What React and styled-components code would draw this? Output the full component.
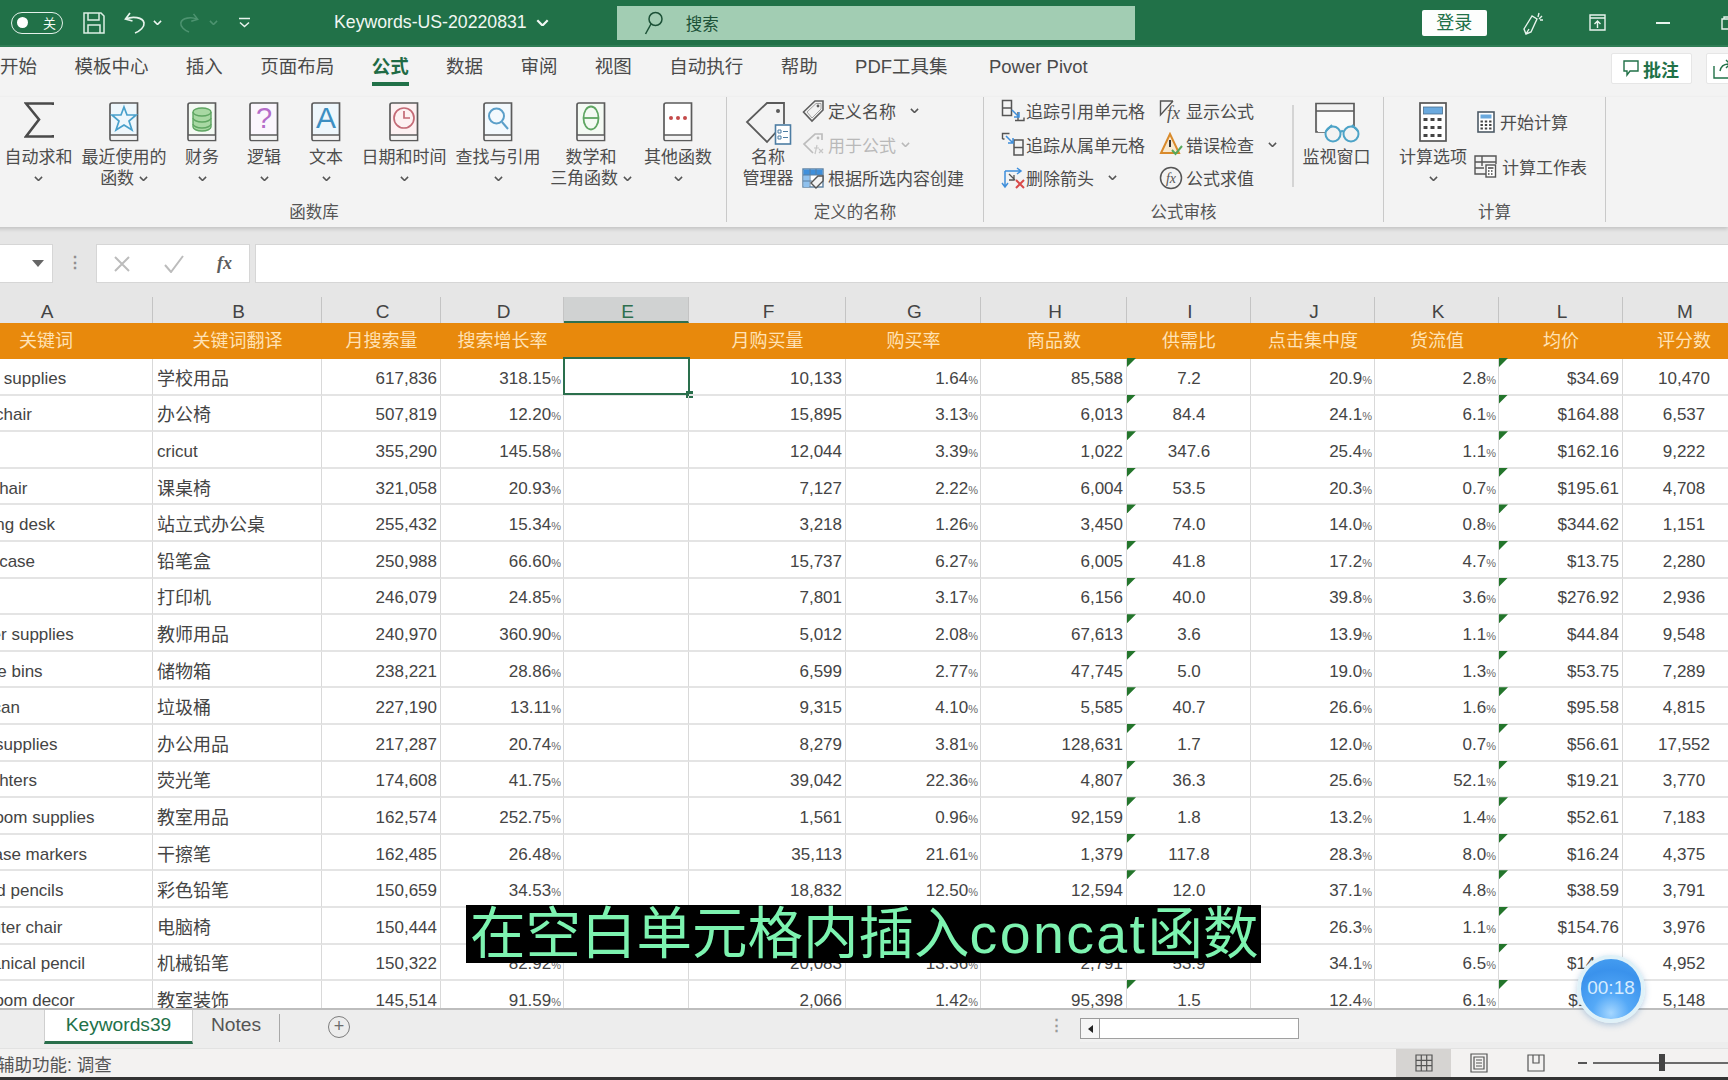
import styled, { createGlobalStyle } from "styled-components";

const GlobalStyle = createGlobalStyle`
  html, body {
    margin: 0;
    padding: 0;
    background: #f3f3f3;
  }
  body {
    font-family: "Liberation Sans", "Noto Sans CJK SC", sans-serif;
    color: #444;
  }
  * {
    box-sizing: border-box;
  }
`;

const Page = styled.div`
  position: relative;
  width: 1728px;
  height: 1080px;
  overflow: hidden;
  display: flex;
  flex-direction: column;
`;

/* title bar */
const TitleBar = styled.div`
  flex: none;
  height: 47px;
  background: #217148;
  border-bottom: 2px solid #2f7d55;
  display: flex;
  align-items: center;
  padding-left: 11px;
  color: #fff;
  white-space: nowrap;
`;

const Slot = styled.span`
  flex: none;
  display: inline-flex;
  align-items: center;
  margin-left: ${(p) => p.$gap || 0}px;
`;

const Toggle = styled.span`
  flex: none;
  width: 52px;
  height: 22px;
  border: 1.5px solid #e4f1ea;
  border-radius: 11px;
  display: flex;
  align-items: center;
  justify-content: space-between;
  padding: 0 6px 0 5px;
  font-size: 13px;
  color: #f2faf5;
  &::before {
    content: "";
    width: 11px;
    height: 11px;
    border-radius: 50%;
    background: #fff;
  }
`;

const DocName = styled.span`
  margin-left: ${(p) => p.$gap}px;
  font-size: 17.7px;
  color: #f1f7f3;
`;

const SearchBox = styled.div`
  flex: none;
  margin: 1px 0 0 68px;
  width: 518px;
  height: 34px;
  background: #a2cdb3;
  display: flex;
  align-items: center;
  padding-left: 27px;
  color: #1c5137;
  font-size: 16.5px;
  gap: 23px;
`;

const LoginBtn = styled.div`
  flex: none;
  margin-left: 287px;
  width: 65px;
  height: 26px;
  background: #fdfefd;
  border-radius: 2px;
  color: #217148;
  font-size: 18px;
  line-height: 26px;
  text-align: center;
`;

/* tabs */
const TabBar = styled.div`
  flex: none;
  height: 50px;
  background: #f3f3f3;
  display: flex;
  align-items: flex-start;
  gap: 37.4px;
  padding-top: 9px;
  white-space: nowrap;
`;

const Tab = styled.div`
  font-size: 18.5px;
  line-height: 22px;
  height: 30px;
  color: ${(p) => (p.$active ? "#1f6b45" : "#4a4a4a")};
  font-weight: ${(p) => (p.$active ? 700 : 400)};
  border-bottom: ${(p) => (p.$active ? "4px solid #217148" : "none")};
  margin-left: ${(p) => p.$gap || 0}px;
`;

const Comment = styled.div`
  flex: none;
  margin-left: auto;
  margin-top: -3px;
  width: 81px;
  height: 31px;
  background: #fff;
  border: 1px solid #e6e6e6;
  border-radius: 2px;
  display: flex;
  align-items: center;
  justify-content: center;
  gap: 4px;
  font-size: 18px;
  font-weight: 700;
  color: #217148;
`;

const ShareStub = styled(Comment)`
  margin-left: -23px;
  margin-right: -18px;
  width: 40px;
  justify-content: flex-start;
  padding-left: 6px;
`;

/* ribbon */
const Ribbon = styled.div`
  flex: none;
  height: 130px;
  background: #f3f3f3;
  display: flex;
  margin-left: -98px;
  width: 1826px;
  padding-bottom: 5px;
  box-shadow: 0 2px 4px rgba(0, 0, 0, 0.16);
  position: relative;
  font-size: 17px;
  color: #4d4d4d;
  white-space: nowrap;
`;

const Group = styled.div`
  flex: none;
  width: ${(p) => p.$w}px;
  border-right: 1.5px solid #c9c9c9;
  display: flex;
  flex-direction: column;
`;

const GroupBody = styled.div`
  flex: 1;
  display: flex;
  padding-left: ${(p) => p.$left || 0}px;
`;

const Caption = styled.div`
  flex: none;
  height: 25px;
  padding-top: 4px;
  line-height: 22px;
  text-align: center;
  font-size: 16.5px;
  color: #555;
`;

const BigBtn = styled.div`
  flex: none;
  width: ${(p) => p.$w}px;
  margin-left: ${(p) => p.$gap || 0}px;
  padding-top: 5px;
  display: flex;
  flex-direction: column;
  align-items: center;
  line-height: 21px;
  text-align: center;
`;

const BigIcon = styled.div`
  height: 40px;
  margin-bottom: 5px;
  display: flex;
  justify-content: center;
  align-items: flex-start;
`;

const ChevronLine = styled.div`
  height: 21px;
  display: flex;
  align-items: center;
  justify-content: center;
`;

const SmallCol = styled.div`
  flex: none;
  width: ${(p) => p.$w}px;
  margin-left: ${(p) => p.$gap || 0}px;
  margin-top: ${(p) => p.$top || 0}px;
`;

const SmallRow = styled.div`
  height: ${(p) => p.$h || 33.5}px;
  display: flex;
  align-items: center;
  color: ${(p) => (p.$off ? "#b9b9b9" : "inherit")};
`;

const SmallIcon = styled.span`
  flex: none;
  width: ${(p) => p.$w || 26}px;
  display: inline-flex;
  align-items: center;
`;

const MiniSep = styled.div`
  flex: none;
  width: 1.5px;
  height: 82px;
  margin-top: 8px;
  background: #d4d4d4;
`;

/* formula bar */
const FormulaBand = styled.div`
  flex: none;
  height: 70px;
  background: #e6e6e6;
  padding-top: 17px;
  display: flex;
  align-items: flex-start;
`;

const NameBox = styled.div`
  flex: none;
  width: 53px;
  height: 39px;
  background: #fff;
  border: 1px solid #d6d6d6;
  border-left: none;
  display: flex;
  align-items: center;
  justify-content: flex-end;
  padding-right: 8px;
`;

const Grip = styled.div`
  flex: none;
  width: 43px;
  height: 39px;
  color: #8f8f8f;
  font-size: 16px;
  line-height: 37px;
  text-align: center;
  font-weight: 700;
`;

const FxBox = styled.div`
  flex: none;
  width: 154px;
  height: 39px;
  background: #fff;
  border: 1px solid #d6d6d6;
  display: flex;
  align-items: center;
  padding-left: 16px;
  gap: 32px;
  color: #bcbcbc;
`;

const FxLabel = styled.span`
  font-family: "Liberation Serif", serif;
  font-style: italic;
  font-weight: 700;
  font-size: 18px;
  color: #5c5c5c;
`;

const FormulaInput = styled.div`
  flex: 1;
  margin-left: 5px;
  height: 39px;
  background: #fff;
  border: 1px solid #d6d6d6;
  border-right: none;
`;

/* sheet */
const COLS = "214px 169px 119px 123px 125px 157px 135px 146px 124px 124px 124px 124px 122px";

const Sheet = styled.div`
  flex: 1;
  min-height: 0;
  overflow: hidden;
  background: #fff;
`;

const SheetGrid = styled.div`
  margin-left: -61px;
  display: grid;
  grid-template-columns: ${COLS};
  grid-template-rows: 26px 36px;
  grid-auto-rows: 36.6px;
  width: 1786px;
`;

const ColHead = styled.div`
  background: ${(p) => (p.$on ? "#d0d2d2" : "#e6e6e6")};
  border-right: 1.5px solid #c4c4c4;
  border-bottom: ${(p) => (p.$on ? "2.5px solid #2e6f4e" : "none")};
  color: ${(p) => (p.$on ? "#2e6f4e" : "#444")};
  font-size: 19px;
  line-height: 29px;
  height: 26px;
  padding-left: 3px;
  overflow: hidden;
  text-align: center;
`;

const OrangeCell = styled.div`
  background: #e8890c;
  color: #ffe2b5;
  font-size: 18px;
  line-height: 36px;
  text-align: center;
  white-space: nowrap;
`;

const aligns = { l: "flex-start", r: "flex-end", c: "center" };

const Cell = styled.div`
  position: relative;
  display: flex;
  align-items: center;
  justify-content: ${(p) => aligns[p.$align]};
  padding: ${(p) => (p.$cjk ? 1 : 5)}px ${(p) => (p.$pct ? 2 : 3)}px 0 ${(p) => (p.$keyword ? 11 : 4)}px;
  border-right: 1px solid #d9d9d9;
  border-bottom: 2px solid #e4e4e4;
  font-size: ${(p) => (p.$cjk ? 18 : 17)}px;
  color: #444;
  white-space: nowrap;
  overflow: visible;
  &::before {
    content: "";
    display: ${(p) => (p.$flag ? "block" : "none")};
    position: absolute;
    left: 0;
    top: -1px;
    width: 9px;
    height: 9px;
    background: #23752b;
    clip-path: polygon(0 0, 100% 0, 0 100%);
  }
`;

const ClipText = styled.span`
  display: block;
`;

const Percent = styled.span`
  font-size: 11px;
  color: #6a6a6a;
`;

const Selection = styled.div`
  position: absolute;
  left: -1px;
  top: -2px;
  right: -2px;
  bottom: -1px;
  border: 2.5px solid #2a6f4c;
  &::after {
    content: "";
    position: absolute;
    right: -5px;
    bottom: -5px;
    width: 7px;
    height: 7px;
    background: #2a6f4c;
  }
`;

/* sheet tabs */
const SheetBar = styled.div`
  flex: none;
  height: 40px;
  background: #ededed;
  border-top: 2px solid #bdbdbd;
  display: flex;
  align-items: flex-start;
  position: relative;
`;

const SheetTab = styled.div`
  flex: none;
  margin-left: ${(p) => p.$gap || 0}px;
  width: ${(p) => p.$w}px;
  height: ${(p) => (p.$active ? 34 : 30)}px;
  text-align: center;
  background: ${(p) => (p.$active ? "#fff" : "transparent")};
  border-bottom: ${(p) => (p.$active ? "3px solid #2a6f4c" : "none")};
  color: ${(p) => (p.$active ? "#217148" : "#555")};
  font-size: 19.2px;
  line-height: 30px;
  border-left: ${(p) => (p.$active ? "1px solid #cfcfcf" : "none")};
  border-right: ${(p) => (p.$active ? "1px solid #cfcfcf" : "none")};
`;

const TabSep = styled.div`
  flex: none;
  width: 1px;
  height: 28px;
  margin: 4px 0 0 17px;
  background: #a8a8a8;
`;

const AddSheet = styled.div`
  flex: none;
  margin: 6px 0 0 48px;
  width: 22px;
  height: 22px;
  border: 1.5px solid #7d7d7d;
  border-radius: 50%;
  color: #6c6c6c;
  font-size: 18px;
  line-height: 18px;
  text-align: center;
`;

const GripV = styled.div`
  flex: none;
  margin: 0 0 0 699px;
  width: 4px;
  height: 30px;
  color: #9a9a9a;
  font-size: 15px;
  line-height: 30px;
  font-weight: 700;
`;

const ScrollArea = styled.div`
  flex: 1;
  margin-left: 27px;
  padding-top: 8px;
  height: 32px;
  background: #f1f1f1;
  display: flex;
`;

const ScrollBtn = styled.div`
  flex: none;
  width: 20px;
  height: 21px;
  background: #f6f6f6;
  border: 1px solid #9a9a9a;
  display: flex;
  align-items: center;
  justify-content: center;
  &::before {
    content: "";
    border-top: 4px solid transparent;
    border-bottom: 4px solid transparent;
    border-right: 5px solid #222;
  }
`;

const ScrollThumb = styled.div`
  flex: none;
  width: 199px;
  height: 21px;
  background: #fff;
  border: 1px solid #a0a0a0;
  border-left: none;
`;

/* status bar */
const StatusBar = styled.div`
  flex: none;
  height: 29px;
  background: #f3f2f1;
  border-top: 1px solid #e2e2e2;
  display: flex;
  align-items: center;
  font-size: 17.5px;
  color: #555;
  white-space: nowrap;
  overflow: hidden;
`;

const StatusText = styled.span`
  flex: none;
  margin-left: -3px;
  width: 1399px;
`;

const ViewBtn = styled.div`
  flex: none;
  width: ${(p) => p.$w}px;
  height: 28px;
  background: ${(p) => (p.$on ? "#d6d4d2" : "transparent")};
  display: flex;
  align-items: center;
  justify-content: center;
`;

const Zoomer = styled.div`
  flex: none;
  margin-left: 14px;
  display: flex;
  align-items: center;
  width: 160px;
`;

const ZoomMinus = styled.span`
  width: 9px;
  height: 1.5px;
  background: #555;
`;

const ZoomLine = styled.div`
  flex: 1;
  margin-left: 6px;
  height: 1.5px;
  background: #6a6a6a;
  position: relative;
  &::after {
    content: "";
    position: absolute;
    left: 66px;
    top: -8px;
    width: 6px;
    height: 17px;
    background: #444;
  }
`;

const BottomEdge = styled.div`
  flex: none;
  height: 3px;
  background: #333;
`;

/* video overlays */
const Subtitle = styled.div`
  position: absolute;
  left: 466px;
  top: 905px;
  width: 795px;
  height: 58px;
  padding-left: 4px;
  background: #000;
  color: #7df3b0;
  font-size: 55.5px;
  line-height: 58px;
  white-space: nowrap;
  overflow: hidden;
`;

const Latin = styled.span`
  letter-spacing: 2.4px;
`;

const Bubble = styled.div`
  position: absolute;
  left: 1577px;
  top: 955px;
  width: 68px;
  height: 68px;
  border-radius: 50%;
  border: 4px solid #dff1f8;
  background: radial-gradient(circle at 50% 90%, #a4d6ff 0, #55a9f7 30%, #3a92ec 70%, #4aa2f2 100%);
  color: #d6ecff;
  font-size: 19px;
  line-height: 58px;
  text-align: center;
  box-shadow: 0 2px 6px rgba(60, 120, 180, 0.35);
`;

/* icons */
const Chevron = ({ color = "#555", size = 9 }) => (
  <svg width={size} height={size * 0.6} viewBox="0 0 10 6" fill="none">
    <path d="M1 1l4 4 4-4" stroke={color} strokeWidth="1.7" />
  </svg>
);

const Book = ({ tint = "#fff", children }) => (
  <svg width="30" height="40" viewBox="0 0 30 40" fill="none">
    <path d="M3 1H28.5V38.5H3Q1 38.5 1 36.5V3Q1 1 3 1Z" fill={tint} stroke="#5b5b5b" strokeWidth="1.7" />
    <rect x="1.9" y="33" width="25.8" height="4.8" fill="#f3f3f3" />
    <path d="M1 33H28.5" stroke="#5b5b5b" strokeWidth="1.5" />
    {children}
  </svg>
);

const Sigma = () => (
  <svg width="30" height="36" viewBox="0 0 30 36" fill="none">
    <path d="M29 3V1.5H2L15 17.5 2 34.5H29V33" stroke="#4a4a4a" strokeWidth="2.6" />
  </svg>
);

const GlyphA = ({ color, children, size }) => (
  <text x="15" y="26" textAnchor="middle" fontSize={size} fontFamily="Liberation Sans, sans-serif" fill={color}>
    {children}
  </text>
);

const NameTag = () => (
  <svg width="47" height="43" viewBox="0 0 47 43" fill="none">
    <path d="M32 29L22 40 2 20 22 1H39V22" stroke="#5a5a5a" strokeWidth="1.8" />
    <circle cx="33" cy="9" r="2" fill="#5a5a5a" />
    <rect x="30.5" y="23" width="15" height="19" fill="#fff" stroke="#4d7da3" strokeWidth="1.6" />
    <path d="M33 28h3v3h-3zM33 34h3v3h-3z" stroke="#4d7da3" strokeWidth="1" />
    <path d="M38 29.5h5M38 35.5h5" stroke="#4d7da3" strokeWidth="1.2" />
  </svg>
);

const TagSmall = ({ off }) => (
  <svg width="22" height="24" viewBox="0 0 22 24" fill="none">
    <path d="M1.5 13L13 2H21V11L10 22Z" stroke={off ? "#bdbdbd" : "#5e5e5e"} strokeWidth="1.6" />
    <path d="M5 13L14 4.5H19V10L10 19Z" stroke={off ? "#d2d2d2" : "#9a9a9a"} strokeWidth="0.9" />
    <circle cx="16" cy="7" r="1.4" fill={off ? "#bdbdbd" : "#5e5e5e"} />
  </svg>
);

const TagFx = () => (
  <svg width="23" height="24" viewBox="0 0 23 24" fill="none">
    <path d="M11 21L2 12 13 2H20V8" stroke="#bdbdbd" strokeWidth="1.7" />
    <circle cx="16" cy="6" r="1.4" fill="#bdbdbd" />
    <path d="M15 13l-2 9M12 16h5M17 17l4 4M21 17l-4 4" stroke="#c6c6c6" strokeWidth="1.2" />
  </svg>
);

const TagGrid = () => (
  <svg width="22" height="22" viewBox="0 0 22 22" fill="none">
    <rect x="1" y="2" width="20" height="18" fill="#fff" stroke="#5a7fa0" strokeWidth="1.4" />
    <rect x="1.5" y="2.5" width="19" height="5.5" fill="#3f8fdb" />
    <rect x="1.5" y="8" width="6" height="12" fill="#8fc1ee" />
    <path d="M8 2v18M14 2v6M1 8h20M1 14h9" stroke="#5a7fa0" strokeWidth="1" />
    <path d="M9 16l7-7h5v5l-7 7z" fill="#f3f3f3" stroke="#555" strokeWidth="1.4" />
  </svg>
);

const TracePrec = () => (
  <svg width="24" height="24" viewBox="0 0 24 24" fill="none">
    <path d="M1.5 1.5h9v15h-9zM1.5 9h9" stroke="#555" strokeWidth="1.5" />
    <path d="M17 13v8.5h6v-3M14 21.5h3" stroke="#555" strokeWidth="1.4" />
    <path d="M11 11l7 7M18 13v5h-5" stroke="#3f8fdb" strokeWidth="1.5" />
  </svg>
);

const TraceDep = () => (
  <svg width="24" height="24" viewBox="0 0 24 24" fill="none">
    <path d="M1.5 7V1.5h7M1.5 7h2" stroke="#555" strokeWidth="1.4" />
    <path d="M13 8h9v15h-9zM13 15.5h9" stroke="#555" strokeWidth="1.5" />
    <path d="M5 4l7 7M12 6v5H7" stroke="#3f8fdb" strokeWidth="1.5" />
  </svg>
);

const RemoveArrows = () => (
  <svg width="25" height="24" viewBox="0 0 25 24" fill="none">
    <path d="M4 5v15M1 17l3 4 3-4" stroke="#3f8fdb" strokeWidth="1.5" />
    <path d="M4 5h15M16 2l4 3-4 3" stroke="#3f8fdb" strokeWidth="1.5" />
    <path d="M8 8l6 6M13 9v5H8" stroke="#555" strokeWidth="1.3" />
    <path d="M15 14l8 8M23 14l-8 8" stroke="#d94a4a" strokeWidth="2" />
  </svg>
);

const ShowFormula = () => (
  <svg width="25" height="24" viewBox="0 0 25 24" fill="none">
    <path d="M14 2H1.5v14L14 2" stroke="#555" strokeWidth="1.4" />
    <text x="8" y="20" fontFamily="Liberation Serif, serif" fontStyle="italic" fontSize="18" fill="#555">fx</text>
  </svg>
);

const ErrorCheck = () => (
  <svg width="25" height="24" viewBox="0 0 25 24" fill="none">
    <path d="M11 2L2 21H20Z" fill="#f7e8cf" stroke="#d98a2b" strokeWidth="2" />
    <path d="M11 8v7" stroke="#333" strokeWidth="2" />
    <path d="M13 18l3.5 4L23 14" stroke="#57a85a" strokeWidth="2" />
  </svg>
);

const EvalFormula = () => (
  <svg width="24" height="24" viewBox="0 0 24 24" fill="none">
    <circle cx="12" cy="12" r="10.5" stroke="#555" strokeWidth="1.5" />
    <text x="12" y="17" textAnchor="middle" fontFamily="Liberation Serif, serif" fontStyle="italic" fontSize="14" fill="#555">fx</text>
  </svg>
);

const Watch = () => (
  <svg width="46" height="42" viewBox="0 0 46 42" fill="none">
    <path d="M16 30H2V1.5H40V24M2 9h38" stroke="#5a5a5a" strokeWidth="1.7" />
    <path d="M4 10h35v14l-25 6H4z" fill="#fafafa" />
    <circle cx="19" cy="32" r="7.5" fill="#f3f3f3" stroke="#4da3c7" strokeWidth="2" />
    <circle cx="37" cy="32" r="7.5" fill="#f3f3f3" stroke="#4da3c7" strokeWidth="2" />
    <path d="M26.5 30q2-2 3 0M12 29l6-6M44 29l-6-6" stroke="#4da3c7" strokeWidth="2" />
  </svg>
);

const CalcBig = () => (
  <svg width="28" height="40" viewBox="0 0 28 40" fill="none">
    <rect x="1" y="1" width="26" height="38" fill="#fff" stroke="#555" strokeWidth="1.7" />
    <rect x="4.5" y="5" width="19" height="7" fill="#6aa9de" stroke="#4a6f8e" strokeWidth="0.8" />
    {[16, 24, 32].map((y) => (
      <path key={y} d={`M4.5 ${y}h4v3h-4zM11.5 ${y}h4v3h-4zM18.5 ${y}h4v3h-4z`} fill="#444" />
    ))}
  </svg>
);

const CalcSmall = () => (
  <svg width="18" height="22" viewBox="0 0 18 22" fill="none">
    <rect x="1" y="1" width="16" height="20" fill="#fff" stroke="#4d5a66" strokeWidth="1.6" />
    <rect x="3.5" y="3.5" width="11" height="4" fill="#6aa9de" />
    {[9.5, 13, 16.5].map((y) => (
      <path key={y} d={`M3.5 ${y}h2.4v2h-2.4zM7.8 ${y}h2.4v2h-2.4zM12.1 ${y}h2.4v2h-2.4z`} fill="#444" />
    ))}
  </svg>
);

const CalcSheet = () => (
  <svg width="23" height="23" viewBox="0 0 23 23" fill="none">
    <path d="M12 19H1V1h21v8M1 7h21M1 13h9M8 1v10" stroke="#555" strokeWidth="1.4" />
    <rect x="12" y="10" width="9.5" height="12" fill="#fff" stroke="#555" strokeWidth="1.4" />
    <path d="M14 13h5.5M14 16h1.5M17 16h1.5M14 19h1.5M17 19h1.5" stroke="#444" strokeWidth="1.3" />
  </svg>
);

const Books = [
  { label: ["最近使用的", "函数"], w: 94, inline: true, tint: "#eef7fc", art: <polygon points="15,5 18,13 27,13 20,19 23,28 15,23 7,28 10,19 3,13 12,13" stroke="#48a0cb" strokeWidth="1.7" /> },
  { label: ["财务"], w: 62, tint: "#f4faf3", art: (
    <g stroke="#5fa662" strokeWidth="1.4" fill="#a8d8a3">
      <path d="M6 22v3c0 2 4 4 9 4s9-2 9-4v-3" />
      <path d="M6 16v6c0 2 4 4 9 4s9-2 9-4v-6" />
      <path d="M6 10v6c0 2 4 4 9 4s9-2 9-4v-6" />
      <ellipse cx="15" cy="10" rx="9" ry="4" />
    </g>
  ) },
  { label: ["逻辑"], w: 62, tint: "#fbf6fd", art: <GlyphA color="#b56cc9" size="29">?</GlyphA> },
  { label: ["文本"], w: 62, tint: "#eef7fc", art: <GlyphA color="#3d8fc2" size="30">A</GlyphA> },
  { label: ["日期和时间"], w: 94, tint: "#fdf1f2", art: (
    <g stroke="#c46a76" strokeWidth="1.7">
      <circle cx="15" cy="16" r="10" />
      <path d="M15 9v7h6" />
    </g>
  ) },
  { label: ["查找与引用"], w: 94, tint: "#f3f9fd", art: (
    <g stroke="#5a9fc9" strokeWidth="2">
      <circle cx="13.5" cy="14" r="7.5" />
      <path d="M19 20l6 7" />
    </g>
  ) },
  { label: ["数学和", "三角函数"], w: 92, inline: true, tint: "#f4faf3", art: (
    <g stroke="#5fa662" strokeWidth="1.8">
      <ellipse cx="15" cy="16" rx="7.5" ry="11.5" />
      <path d="M7.5 16h15" />
    </g>
  ) },
  { label: ["其他函数"], w: 82, tint: "#fff", art: (
    <g fill="#c44a4a">
      <circle cx="8" cy="16" r="2" />
      <circle cx="15" cy="16" r="2" />
      <circle cx="22" cy="16" r="2" />
    </g>
  ) },
];

const TABS = ["模板中心", "插入", "页面布局"];
const TABS2 = ["数据", "审阅", "视图", "自动执行", "帮助", "PDF工具集"];

const HEADS = ["关键词", "关键词翻译", "月搜索量", "搜索增长率", "", "月购买量", "购买率", "商品数", "供需比", "点击集中度", "货流值", "均价", "评分数"];
const LETTERS = "ABCDEFGHIJKLM".split("");
const ALIGN = ["l", "l", "r", "r", "r", "r", "r", "r", "c", "r", "r", "r", "c"];

const ROWS = [
  ["school supplies", "学校用品", "617,836", "318.15%", "", "10,133", "1.64%", "85,588", "7.2", "20.9%", "2.8%", "$34.69", "10,470"],
  ["office chair", "办公椅", "507,819", "12.20%", "", "15,895", "3.13%", "6,013", "84.4", "24.1%", "6.1%", "$164.88", "6,537"],
  ["cricut", "cricut", "355,290", "145.58%", "", "12,044", "3.39%", "1,022", "347.6", "25.4%", "1.1%", "$162.16", "9,222"],
  ["desk chair", "课桌椅", "321,058", "20.93%", "", "7,127", "2.22%", "6,004", "53.5", "20.3%", "0.7%", "$195.61", "4,708"],
  ["standing desk", "站立式办公桌", "255,432", "15.34%", "", "3,218", "1.26%", "3,450", "74.0", "14.0%", "0.8%", "$344.62", "1,151"],
  ["pencil case", "铅笔盒", "250,988", "66.60%", "", "15,737", "6.27%", "6,005", "41.8", "17.2%", "4.7%", "$13.75", "2,280"],
  ["printer", "打印机", "246,079", "24.85%", "", "7,801", "3.17%", "6,156", "40.0", "39.8%", "3.6%", "$276.92", "2,936"],
  ["teacher supplies", "教师用品", "240,970", "360.90%", "", "5,012", "2.08%", "67,613", "3.6", "13.9%", "1.1%", "$44.84", "9,548"],
  ["storage bins", "储物箱", "238,221", "28.86%", "", "6,599", "2.77%", "47,745", "5.0", "19.0%", "1.3%", "$53.75", "7,289"],
  ["trash can", "垃圾桶", "227,190", "13.11%", "", "9,315", "4.10%", "5,585", "40.7", "26.6%", "1.6%", "$95.58", "4,815"],
  ["office supplies", "办公用品", "217,287", "20.74%", "", "8,279", "3.81%", "128,631", "1.7", "12.0%", "0.7%", "$56.61", "17,552"],
  ["highlighters", "荧光笔", "174,608", "41.75%", "", "39,042", "22.36%", "4,807", "36.3", "25.6%", "52.1%", "$19.21", "3,770"],
  ["classroom supplies", "教室用品", "162,574", "252.75%", "", "1,561", "0.96%", "92,159", "1.8", "13.2%", "1.4%", "$52.61", "7,183"],
  ["dry erase markers", "干擦笔", "162,485", "26.48%", "", "35,113", "21.61%", "1,379", "117.8", "28.3%", "8.0%", "$16.24", "4,375"],
  ["colored pencils", "彩色铅笔", "150,659", "34.53%", "", "18,832", "12.50%", "12,594", "12.0", "37.1%", "4.8%", "$38.59", "3,791"],
  ["computer chair", "电脑椅", "150,444", "", "", "", "", "", "", "26.3%", "1.1%", "$154.76", "3,976"],
  ["mechanical pencil", "机械铅笔", "150,322", "82.92%", "", "20,083", "13.36%", "2,791", "53.9", "34.1%", "6.5%", "$14.60", "4,952"],
  ["classroom decor", "教室装饰", "145,514", "91.59%", "", "2,066", "1.42%", "95,398", "1.5", "12.4%", "6.1%", "$11.20", "5,148"],
];

function CellText({ value }) {
  if (value.endsWith("%")) {
    return (
      <ClipText>
        {value.slice(0, -1)}
        <Percent>%</Percent>
      </ClipText>
    );
  }
  return <ClipText>{value}</ClipText>;
}

function App() {
  return (
    <Page>
      <GlobalStyle />
      <TitleBar>
        <Toggle>关</Toggle>
        <Slot $gap={20}>
          <svg width="22" height="22" viewBox="0 0 22 22" fill="none" stroke="#dceee4" strokeWidth="1.5">
            <path d="M1 1h17l3 3v17H1zM5 1v7h11V1M5 21v-8h12v8" />
          </svg>
        </Slot>
        <Slot $gap={19}>
          <svg width="22" height="22" viewBox="0 0 22 22" fill="none" stroke="#e8f4ed" strokeWidth="1.7">
            <path d="M6 1L1.5 7l7 2M2 7c6-3 17-2 18 4 .6 4-4 8-9 10" />
          </svg>
        </Slot>
        <Slot $gap={7}><Chevron color="#eef7f2" /></Slot>
        <Slot $gap={17}>
          <svg width="20" height="22" viewBox="0 0 22 22" fill="none" stroke="#4d9370" strokeWidth="1.7">
            <path d="M16 1l4.500 6-7 2M20 7C14 4 3 5 2 11c-.6 4 4 8 9 10" />
          </svg>
        </Slot>
        <Slot $gap={10}><Chevron color="#4d9370" /></Slot>
        <Slot $gap={21}>
          <svg width="11" height="12" viewBox="0 0 11 12" fill="none" stroke="#e8f4ed" strokeWidth="1.5">
            <path d="M0 1.500h11M1 5.500l4.500 4 4.500-4" />
          </svg>
        </Slot>
        <DocName $gap={84}>Keywords-US-20220831</DocName>
        <Slot $gap={9}><Chevron color="#f1f7f3" size={13} /></Slot>
        <SearchBox>
          <svg width="19" height="24" viewBox="0 0 19 24" fill="none" stroke="#1c5137" strokeWidth="1.5">
            <circle cx="11.500" cy="8" r="6.500" />
            <path d="M7 13L1.500 23" />
          </svg>
          搜索
        </SearchBox>
        <LoginBtn>登录</LoginBtn>
        <Slot $gap={35}>
          <svg width="22" height="24" viewBox="0 0 22 24" fill="none" stroke="#e8f4ed" strokeWidth="1.4">
            <path d="M10 5L2 18l2 5 5-2 6-13zM4 23l3-5" />
            <path d="M17 2l-1 4M20 5l-3 3M21 9h-3" />
          </svg>
        </Slot>
        <Slot $gap={45}>
          <svg width="17" height="17" viewBox="0 0 17 17" fill="none" stroke="#e8f4ed" strokeWidth="1.4">
            <path d="M1 1h15v15H1zM1 4h15M8.500 14V7M5.500 10l3-3 3 3" />
          </svg>
        </Slot>
        <Slot $gap={50}>
          <svg width="14" height="2" viewBox="0 0 14 2"><rect width="14" height="2" fill="#e8f4ed" /></svg>
        </Slot>
        <Slot $gap={51}>
          <svg width="14" height="14" viewBox="0 0 14 14" fill="none" stroke="#e8f4ed" strokeWidth="1.4">
            <path d="M1 3h10v10H1zM3 3V1h10v10h-2" />
          </svg>
        </Slot>
      </TitleBar>

      <TabBar>
        <Tab>开始</Tab>
        {TABS.map((t) => <Tab key={t}>{t}</Tab>)}
        <Tab $active>公式</Tab>
        {TABS2.map((t) => <Tab key={t}>{t}</Tab>)}
        <Tab $gap={4}>Power Pivot</Tab>
        <Comment>
          <svg width="16" height="17" viewBox="0 0 16 17" fill="none" stroke="#217148" strokeWidth="1.4">
            <path d="M1 1h14v10H7l-3 4v-4H1z" />
          </svg>
          批注
        </Comment>
        <ShareStub>
          <svg width="22" height="20" viewBox="0 0 22 20" fill="none" stroke="#217148" strokeWidth="1.4">
            <path d="M1 7v12h18V12M7 12c1-5 5-7 9-7M13 1l4 4-4 4" />
          </svg>
        </ShareStub>
      </TabBar>

      <Ribbon>
        <Group $w={825}>
          <GroupBody $left={98}>
            <BigBtn $w={77}>
              <BigIcon><Sigma /></BigIcon>
              <div>自动求和</div>
              <ChevronLine><Chevron /></ChevronLine>
            </BigBtn>
            {Books.map((b) => (
              <BigBtn key={b.label[0]} $w={b.w}>
                <BigIcon><Book tint={b.tint}>{b.art}</Book></BigIcon>
                <div>{b.label[0]}</div>
                {b.inline ? (
                  <ChevronLine>{b.label[1]}&nbsp;<Chevron /></ChevronLine>
                ) : (
                  <ChevronLine><Chevron /></ChevronLine>
                )}
              </BigBtn>
            ))}
          </GroupBody>
          <Caption>函数库</Caption>
        </Group>

        <Group $w={257}>
          <GroupBody $left={6}>
            <BigBtn $w={70}>
              <BigIcon><NameTag /></BigIcon>
              <div>名称</div>
              <div>管理器</div>
            </BigBtn>
            <SmallCol $w={175} $gap={-1} $top={-3}>
              <SmallRow>
                <SmallIcon><TagSmall /></SmallIcon>
                定义名称
                <Slot $gap={14}><Chevron /></Slot>
              </SmallRow>
              <SmallRow $off>
                <SmallIcon><TagFx /></SmallIcon>
                用于公式
                <Slot $gap={5}><Chevron color="#b9b9b9" /></Slot>
              </SmallRow>
              <SmallRow>
                <SmallIcon><TagGrid /></SmallIcon>
                根据所选内容创建
              </SmallRow>
            </SmallCol>
          </GroupBody>
          <Caption>定义的名称</Caption>
        </Group>

        <Group $w={400}>
          <GroupBody $left={17}>
            <SmallCol $w={158} $top={-3}>
              <SmallRow>
                <SmallIcon $w={25}><TracePrec /></SmallIcon>
                追踪引用单元格
              </SmallRow>
              <SmallRow>
                <SmallIcon $w={25}><TraceDep /></SmallIcon>
                追踪从属单元格
              </SmallRow>
              <SmallRow>
                <SmallIcon $w={25}><RemoveArrows /></SmallIcon>
                删除箭头
                <Slot $gap={14}><Chevron /></Slot>
              </SmallRow>
            </SmallCol>
            <SmallCol $w={133} $top={-3}>
              <SmallRow>
                <SmallIcon $w={27}><ShowFormula /></SmallIcon>
                显示公式
              </SmallRow>
              <SmallRow>
                <SmallIcon $w={27}><ErrorCheck /></SmallIcon>
                错误检查
                <Slot $gap={14}><Chevron /></Slot>
              </SmallRow>
              <SmallRow>
                <SmallIcon $w={27}><EvalFormula /></SmallIcon>
                公式求值
              </SmallRow>
            </SmallCol>
            <MiniSep />
            <BigBtn $w={86}>
              <BigIcon><Watch /></BigIcon>
              <div>监视窗口</div>
            </BigBtn>
          </GroupBody>
          <Caption>公式审核</Caption>
        </Group>

        <Group $w={222}>
          <GroupBody $left={10}>
            <BigBtn $w={78}>
              <BigIcon><CalcBig /></BigIcon>
              <div>计算选项</div>
              <ChevronLine><Chevron /></ChevronLine>
            </BigBtn>
            <SmallCol $w={125} $gap={2} $top={2}>
              <SmallRow $h={45}>
                <SmallIcon $w={26}><Slot $gap={3}><CalcSmall /></Slot></SmallIcon>
                开始计算
              </SmallRow>
              <SmallRow $h={45}>
                <SmallIcon $w={28}><CalcSheet /></SmallIcon>
                计算工作表
              </SmallRow>
            </SmallCol>
          </GroupBody>
          <Caption>计算</Caption>
        </Group>
      </Ribbon>

      <FormulaBand>
        <NameBox>
          <svg width="12" height="7" viewBox="0 0 12 7"><path d="M0 0h12L6 7z" fill="#666" /></svg>
        </NameBox>
        <Grip>⋮</Grip>
        <FxBox>
          <svg width="18" height="18" viewBox="0 0 18 18" fill="none" stroke="#bcbcbc" strokeWidth="2">
            <path d="M2 2l14 14M16 2L2 16" />
          </svg>
          <svg width="22" height="18" viewBox="0 0 22 18" fill="none" stroke="#bcbcbc" strokeWidth="2">
            <path d="M2 10l6 7L20 1" />
          </svg>
          <FxLabel>fx</FxLabel>
        </FxBox>
        <FormulaInput />
      </FormulaBand>

      <Sheet>
        <SheetGrid>
          {LETTERS.map((l) => <ColHead key={l} $on={l === "E"}>{l}</ColHead>)}
          {HEADS.map((h, i) => <OrangeCell key={LETTERS[i]}>{h}</OrangeCell>)}
          {ROWS.map((row, r) =>
            row.map((value, c) => (
              <Cell
                key={`${r}-${c}`}
                $align={ALIGN[c]}
                $keyword={c === 0}
                $cjk={c === 1 && value !== "cricut"}
                $pct={value.endsWith("%")}
                $flag={(c === 8 || c === 11) && value !== ""}
              >
                <CellText value={value} />
                {r === 0 && c === 4 && <Selection />}
              </Cell>
            ))
          )}
        </SheetGrid>
      </Sheet>

      <SheetBar>
        <SheetTab $active $gap={44} $w={149}>Keywords39</SheetTab>
        <SheetTab $gap={17} $w={52}>Notes</SheetTab>
        <TabSep />
        <AddSheet>+</AddSheet>
        <GripV>⋮</GripV>
        <ScrollArea>
          <ScrollBtn />
          <ScrollThumb />
        </ScrollArea>
      </SheetBar>

      <StatusBar>
        <StatusText>辅助功能: 调查</StatusText>
        <ViewBtn $on $w={55}>
          <svg width="18" height="18" viewBox="0 0 18 18" fill="none" stroke="#555" strokeWidth="1.2">
            <path d="M1 1h16v16H1zM6.300 1v16M11.700 1v16M1 6.300h16M1 11.700h16" />
          </svg>
        </ViewBtn>
        <ViewBtn $w={56}>
          <svg width="18" height="20" viewBox="0 0 18 20" fill="none" stroke="#555" strokeWidth="1.2">
            <path d="M1 1h16v18H1zM4 4h10v12H4zM6 7h6M6 10h6M6 13h6" />
          </svg>
        </ViewBtn>
        <ViewBtn $w={57}>
          <svg width="18" height="18" viewBox="0 0 18 18" fill="none" stroke="#555" strokeWidth="1.2">
            <path d="M1 1h16v16H1zM6 1v8h6V1" />
          </svg>
        </ViewBtn>
        <Zoomer>
          <ZoomMinus />
          <ZoomLine />
        </Zoomer>
      </StatusBar>
      <BottomEdge />

      <Subtitle>
        在空白单元格内插入<Latin>concat</Latin>函数
      </Subtitle>
      <Bubble>00:18</Bubble>
    </Page>
  );
}

export default App;
